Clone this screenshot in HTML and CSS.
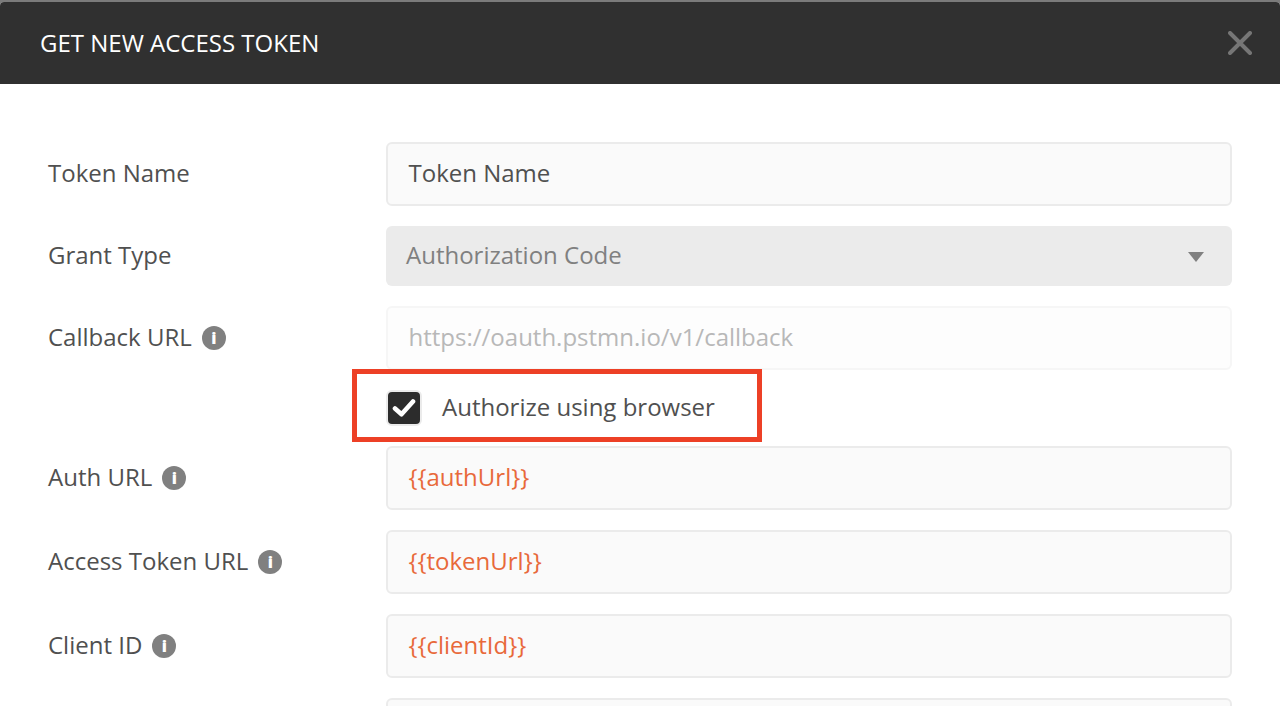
FILE: index.html
```html
<!DOCTYPE html>
<html lang="en">
<head>
    <meta charset="UTF-8">
    <title>Get New Access Token</title>
    <link rel="stylesheet" href="styles.css">
</head>
<body>
    <div class="modal">
        <div class="modal-header">
            <h1>GET NEW ACCESS TOKEN</h1>
            <svg class="close" width="24" height="24" viewBox="0 0 24 24">
                <path d="M2 2 L22 22 M22 2 L2 22" stroke="#767676" stroke-width="4" stroke-linecap="round" fill="none"/>
            </svg>
        </div>

        <div class="modal-body">
            <div class="row">
                <label>Token Name</label>
                <div class="field">Token Name</div>
            </div>

            <div class="row row-select">
                <label>Grant Type</label>
                <div class="select">
                    <span class="select-text">Authorization Code</span>
                    <span class="caret"></span>
                </div>
            </div>

            <div class="row row-tight">
                <label>Callback URL <span class="info">i</span></label>
                <div class="field field-disabled">https://oauth.pstmn.io/v1/callback</div>
            </div>

            <div class="row row-check">
                <div class="check-wrap">
                    <div class="check-highlight"></div>
                    <span class="checkbox">
                        <svg width="24" height="20" viewBox="0 0 24 20">
                            <path d="M3 10.5 L9.5 16.2 L21 3.5" stroke="#fff" stroke-width="4.6" stroke-linecap="round" stroke-linejoin="round" fill="none"/>
                        </svg>
                    </span>
                    <span class="check-label">Authorize using browser</span>
                </div>
            </div>

            <div class="row">
                <label>Auth URL <span class="info">i</span></label>
                <div class="field field-var">{{authUrl}}</div>
            </div>

            <div class="row">
                <label>Access Token URL <span class="info">i</span></label>
                <div class="field field-var">{{tokenUrl}}</div>
            </div>

            <div class="row">
                <label>Client ID <span class="info">i</span></label>
                <div class="field field-var">{{clientId}}</div>
            </div>

            <div class="row">
                <label></label>
                <div class="field"></div>
            </div>
        </div>
    </div>
</body>
</html>
```

FILE: styles.css
```css
* {
    margin: 0;
    padding: 0;
    box-sizing: border-box;
}

html, body {
    height: 100%;
    overflow: hidden;
}

body {
    font-family: "Open Sans", sans-serif;
    background: #7b7b7b;
    color: #505050;
    padding-top: 2px;
}

.modal {
    background: white;
    height: 100%;
    border-radius: 4px 4px 0 0;
    overflow: hidden;
}

.modal-header {
    height: 82px;
    background: #303030;
    display: flex;
    justify-content: space-between;
    align-items: center;
    padding: 0 28px 0 40px;
}

h1 {
    color: white;
    font-size: 24px;
    font-weight: 400;
    padding-bottom: 2px;
}

.modal-body {
    padding: 58px 48px 0;
}

.row {
    display: grid;
    grid-template-columns: 338px 1fr;
    align-items: center;
    margin-bottom: 20px;
}

.row-tight {
    margin-bottom: 0;
}

label {
    font-size: 24px;
    display: flex;
    align-items: center;
    gap: 10px;
    padding-bottom: 4px;
}

.field {
    height: 64px;
    background: #fafafa;
    border: 2px solid #ebebeb;
    border-radius: 6px;
    padding: 0 20px 0 20.5px;
    font-size: 24px;
    line-height: 58px;
}

.field-disabled {
    background: #fdfdfd;
    border-color: #f6f6f6;
    color: #b8b8b8;
}

.field-var {
    color: #e8693a;
}

.select {
    height: 60px;
    background: #ebebeb;
    border-radius: 6px;
    padding: 0 28px 0 20px;
    font-size: 24px;
    color: #808080;
    display: flex;
    justify-content: space-between;
    align-items: center;
}

.select-text {
    padding-bottom: 4px;
}

.caret {
    width: 0;
    height: 0;
    margin-top: 2px;
    border-left: 8px solid transparent;
    border-right: 8px solid transparent;
    border-top: 10px solid #808080;
}

.info {
    width: 24px;
    height: 24px;
    margin-top: 4px;
    border-radius: 50%;
    background: #808080;
    color: white;
    font-size: 16px;
    font-weight: 800;
    line-height: 24px;
    text-align: center;
}

.row-check {
    height: 76px;
    margin-bottom: 0;
    align-items: start;
}

.check-wrap {
    grid-column: 2;
    position: relative;
    display: flex;
    align-items: flex-start;
    gap: 20px;
    padding-top: 20px;
}

.check-highlight {
    position: absolute;
    left: -34px;
    top: -1px;
    width: 410px;
    height: 73px;
    border: 5px solid #ed4026;
}

.checkbox {
    width: 36px;
    height: 36px;
    background: #2c2c2c;
    border: 2px solid #ebebeb;
    border-radius: 6px;
    display: flex;
    align-items: center;
    justify-content: center;
}

.check-label {
    font-size: 24px;
    padding-bottom: 4px;
}

.close {
    display: block;
}
```
